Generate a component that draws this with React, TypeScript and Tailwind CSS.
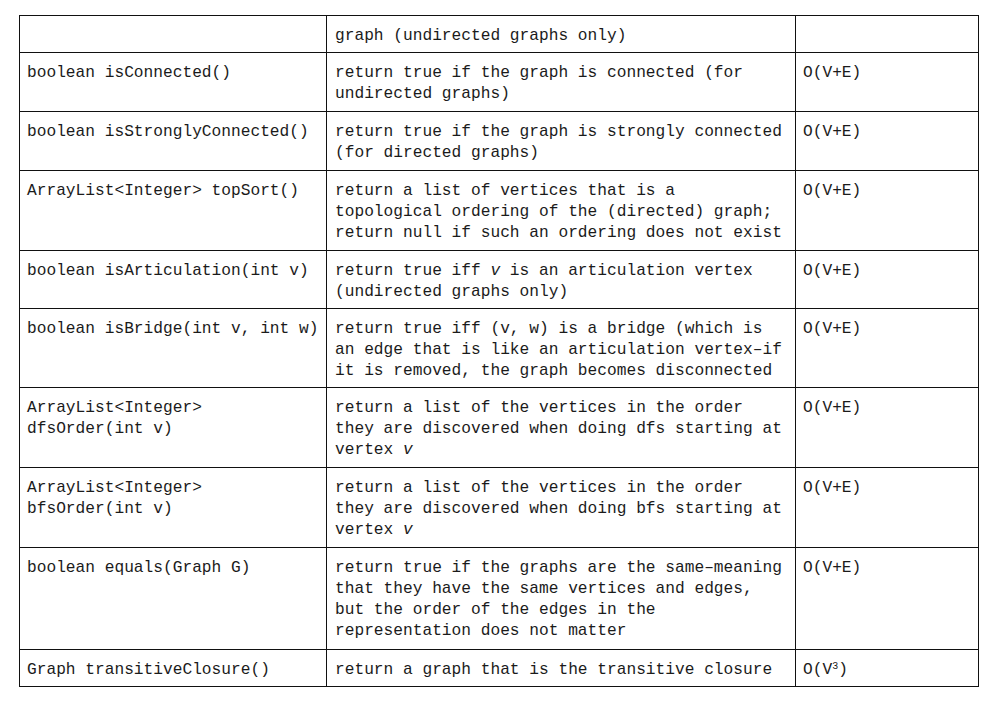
const rows: { sig: React.ReactNode; desc: React.ReactNode; cost: React.ReactNode; h: string }[] = [
  { sig: '', desc: <>graph (undirected graphs only)</>, cost: '', h: 'h-[37px]' },
  {
    sig: 'boolean isConnected()',
    desc: <>return true if the graph is connected (for<br />undirected graphs)</>,
    cost: 'O(V+E)',
    h: 'h-[59px]',
  },
  {
    sig: 'boolean isStronglyConnected()',
    desc: <>return true if the graph is strongly connected<br />(for directed graphs)</>,
    cost: 'O(V+E)',
    h: 'h-[59px]',
  },
  {
    sig: 'ArrayList<Integer> topSort()',
    desc: (
      <>
        return a list of vertices that is a<br />topological ordering of the (directed) graph;<br />return null if such an ordering does not exist
      </>
    ),
    cost: 'O(V+E)',
    h: 'h-[80px]',
  },
  {
    sig: 'boolean isArticulation(int v)',
    desc: (
      <>
        return true iff <i>v</i> is an articulation vertex<br />(undirected graphs only)
      </>
    ),
    cost: 'O(V+E)',
    h: 'h-[58px]',
  },
  {
    sig: 'boolean isBridge(int v, int w)',
    desc: (
      <>
        return true iff (v, w) is a bridge (which is<br />an edge that is like an articulation vertex–if<br />it is removed, the graph becomes disconnected
      </>
    ),
    cost: 'O(V+E)',
    h: 'h-[79px]',
  },
  {
    sig: <>ArrayList&lt;Integer&gt;<br />dfsOrder(int v)</>,
    desc: (
      <>
        return a list of the vertices in the order<br />they are discovered when doing dfs starting at<br />vertex <i>v</i>
      </>
    ),
    cost: 'O(V+E)',
    h: 'h-[80px]',
  },
  {
    sig: <>ArrayList&lt;Integer&gt;<br />bfsOrder(int v)</>,
    desc: (
      <>
        return a list of the vertices in the order<br />they are discovered when doing bfs starting at<br />vertex <i>v</i>
      </>
    ),
    cost: 'O(V+E)',
    h: 'h-[80px]',
  },
  {
    sig: 'boolean equals(Graph G)',
    desc: (
      <>
        return true if the graphs are the same–meaning<br />that they have the same vertices and edges,<br />but the order of the edges in the<br />representation does not matter
      </>
    ),
    cost: 'O(V+E)',
    h: 'h-[102px]',
  },
  {
    sig: 'Graph transitiveClosure()',
    desc: <>return a graph that is the transitive closure</>,
    cost: (
      <>
        O(V<span className="inline-block align-top text-[10px] leading-[14px]">3</span>)
      </>
    ),
    h: 'h-[37px]',
  },
];

export default function App() {
  return (
    <div className="min-h-[703px] w-[994px] bg-white pl-[19px] pt-[15px] text-[#1b1b1b] [font-family:'Liberation_Mono',monospace] text-[16.2px] leading-[21px]">
      <table className="w-[959px] table-fixed border-collapse">
        <colgroup>
          <col className="w-[307px]" />
          <col className="w-[469px]" />
          <col className="w-[183px]" />
        </colgroup>
        <tbody>
          {rows.map((r, i) => (
            <tr key={i} className={r.h}>
              <td className="border border-[#111] px-[7px] pt-[10px] pb-[4px] align-top whitespace-nowrap">{r.sig}</td>
              <td className="border border-[#111] px-[8px] pt-[10px] pb-[4px] align-top whitespace-nowrap">{r.desc}</td>
              <td className="border border-[#111] px-[7px] pt-[10px] pb-[4px] align-top whitespace-nowrap">{r.cost}</td>
            </tr>
          ))}
        </tbody>
      </table>
    </div>
  );
}
